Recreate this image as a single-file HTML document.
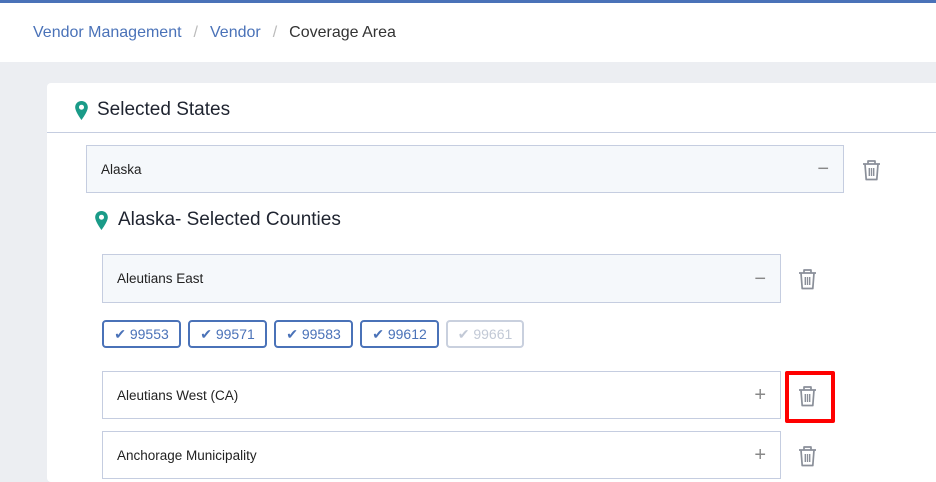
<!DOCTYPE html>
<html style="overflow:hidden;width:936px;height:482px"><head><style>
*{box-sizing:border-box;margin:0;padding:0}
body{width:936px;height:482px;overflow:hidden;background:#eceef2;font-family:"Liberation Sans",sans-serif;position:relative}
.top{position:absolute;left:0;top:0;width:936px;height:3px;background:#4a72b8}
.hdr{position:absolute;left:0;top:3px;width:936px;height:59px;background:#fff;font-size:16px;line-height:59px;padding-left:33px;color:#333}
.hdr a{color:#4a72b8;text-decoration:none}
.hdr .s{color:#bbb;margin:0 12px}
.card{position:absolute;left:47px;top:83px;width:900px;height:399px;background:#fff;border-radius:4px}
.ch{position:absolute;left:0;top:0;width:900px;height:50px;border-bottom:1px solid #c5cde0}
.t{position:absolute;font-size:19px;color:#1f2430;display:flex;align-items:center}
.box{position:absolute;background:#f5f8fb;border:1px solid #c5cde0;font-size:13.5px;color:#222;padding-left:14px;display:flex;align-items:center}
.box.w{background:#fff}
.box .pm{position:absolute;right:14px;top:50%;transform:translateY(-50%);font-size:20px;line-height:20px;color:#888}
.tr{position:absolute;width:19px;height:22px}
.chip{position:absolute;top:320px;height:28px;width:79px;border:2px solid #4a72b8;border-radius:4px;color:#4a72b8;font-size:14px;display:flex;align-items:center;justify-content:center}
.chip.d{border-color:#c9d0de;color:#c2c9d6}
.red{position:absolute;left:785px;top:371px;width:50px;height:52px;border:4px solid #f00;border-radius:2px}
</style></head><body>
<div class="top"></div>
<div class="hdr"><a>Vendor Management</a><span class="s">/</span><a>Vendor</a><span class="s">/</span>Coverage Area</div>
<div class="card"><div class="ch"></div></div>
<svg width="0" height="0" style="position:absolute"><defs>
<symbol id="pin" viewBox="0 0 12 18"><path d="M6 0C2.7 0 0 2.6 0 5.9 0 10 6 18 6 18s6-8 6-12.1C12 2.6 9.3 0 6 0zm0 8.3a2.4 2.4 0 1 1 0-4.8 2.4 2.4 0 0 1 0 4.8z" fill="#1a9b88"/></symbol>
<symbol id="tr" viewBox="0 0 19 22"><g fill="none" stroke="#8a8f99" stroke-width="1.7" stroke-linejoin="round"><path d="M1 5h17M6 5V2h7v3M3 5l1.2 15.5h10.6L16 5"/><path d="M7.3 9v8M9.5 9v8M11.7 9v8" stroke-width="1.4"/></g></symbol>
</defs></svg>
<div class="t" style="left:75px;top:99px"><svg width="13" height="19" style="margin-right:9px"><use href="#pin"/></svg>Selected States</div>
<div class="box" style="left:86px;top:145px;width:758px;height:48px">Alaska<span class="pm">−</span></div>
<svg class="tr" style="left:862px;top:159px"><use href="#tr"/></svg>
<div class="t" style="left:95px;top:209px"><svg width="13" height="19" style="margin-right:10px"><use href="#pin"/></svg>Alaska- Selected Counties</div>
<div class="box" style="left:102px;top:254px;width:679px;height:49px">Aleutians East<span class="pm">−</span></div>
<svg class="tr" style="left:798px;top:268px"><use href="#tr"/></svg>
<div class="chip" style="left:102px">✔ 99553</div>
<div class="chip" style="left:188px">✔ 99571</div>
<div class="chip" style="left:274px">✔ 99583</div>
<div class="chip" style="left:360px">✔ 99612</div>
<div class="chip d" style="left:446px;width:78px">✔ 99661</div>
<div class="box w" style="left:102px;top:371px;width:679px;height:48px">Aleutians West (CA)<span class="pm">+</span></div>
<svg class="tr" style="left:798px;top:385px"><use href="#tr"/></svg>
<div class="red"></div>
<div class="box w" style="left:102px;top:431px;width:679px;height:48px">Anchorage Municipality<span class="pm">+</span></div>
<svg class="tr" style="left:798px;top:445px"><use href="#tr"/></svg>
</body></html>
